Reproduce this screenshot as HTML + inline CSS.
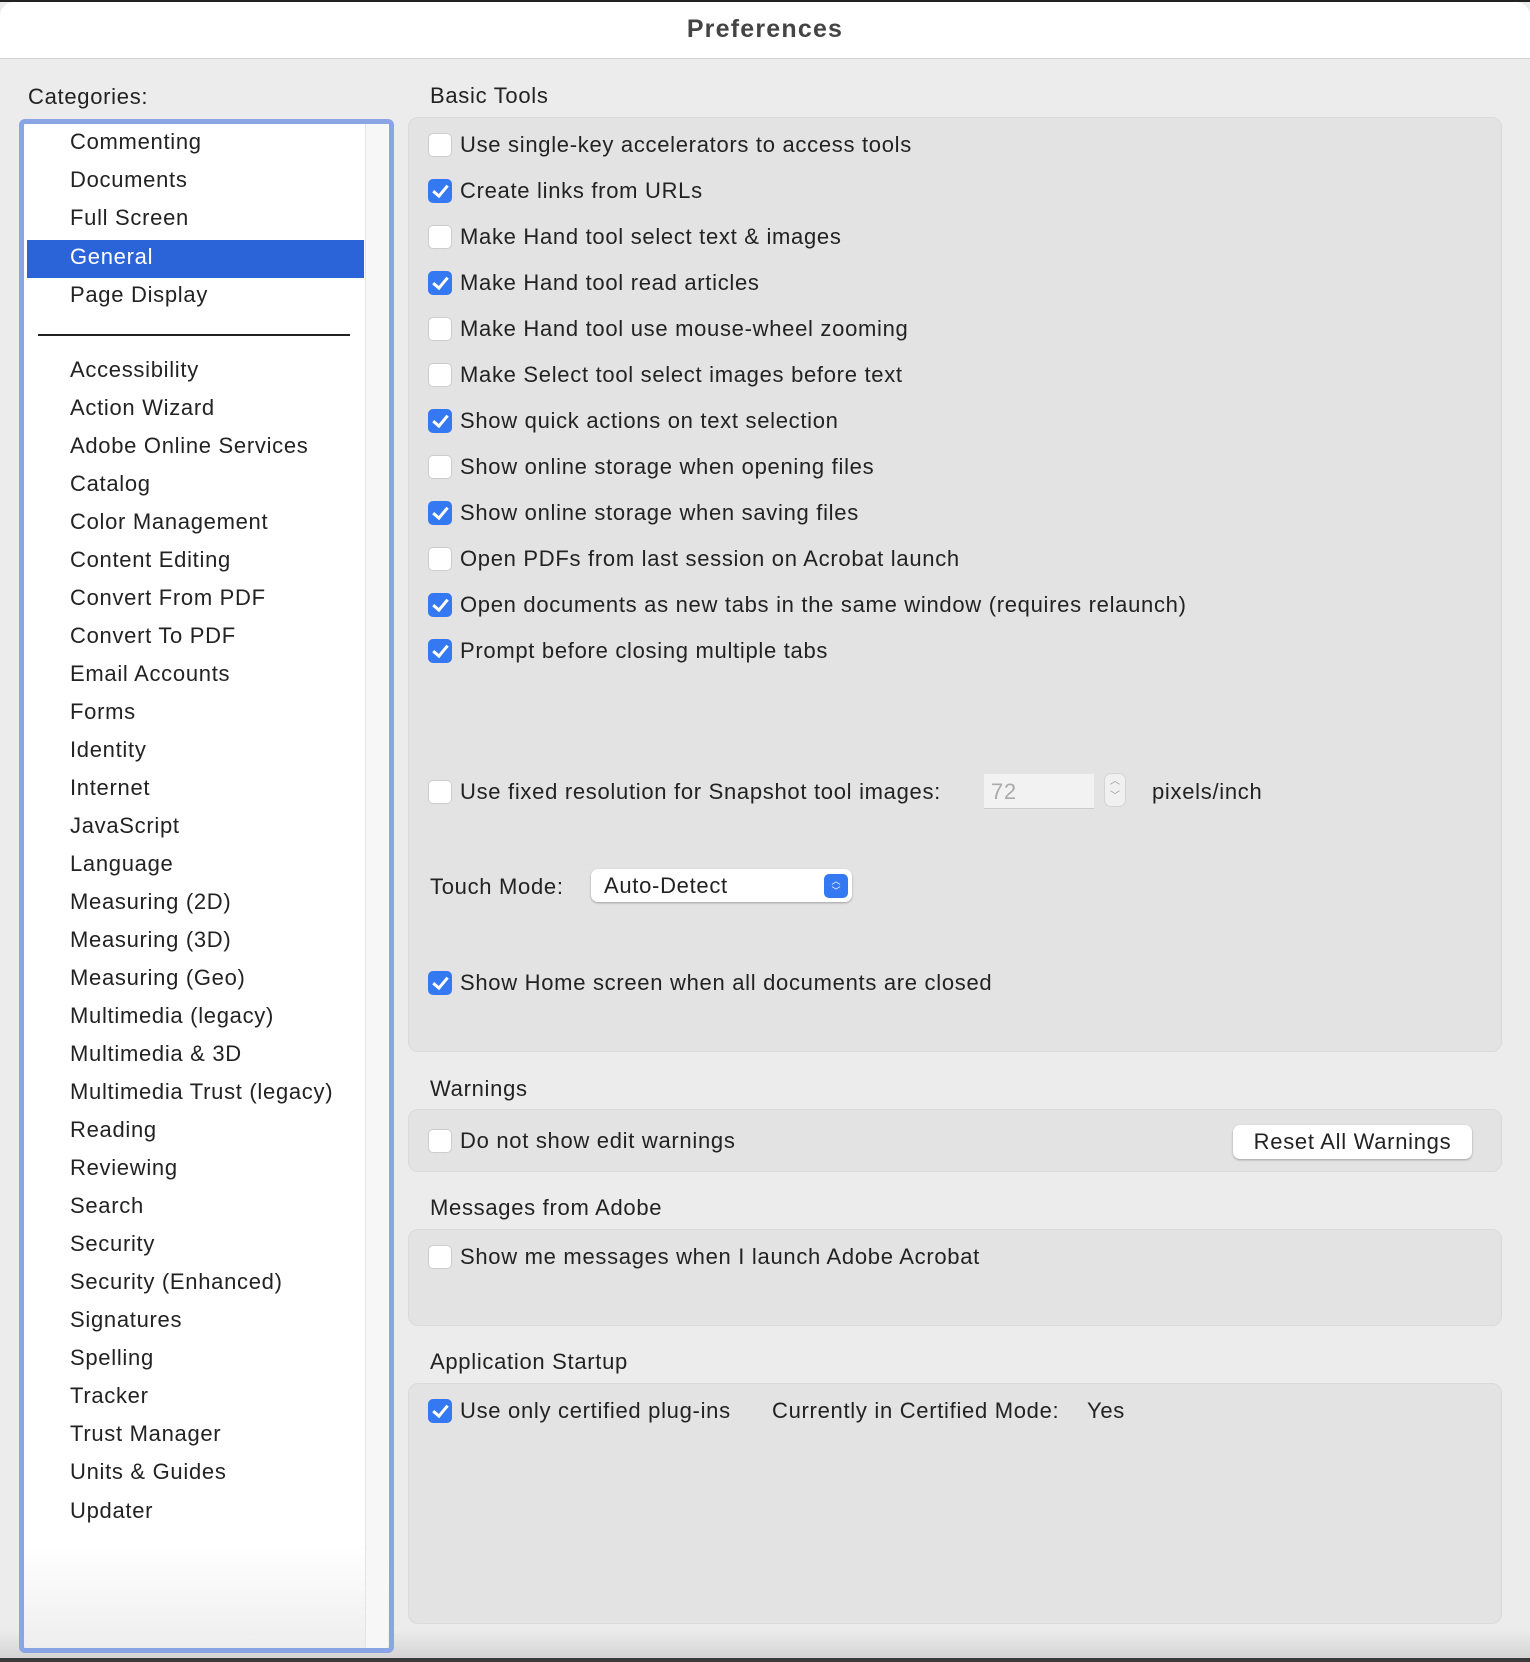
<!DOCTYPE html>
<html><head><meta charset="utf-8"><style>
*{margin:0;padding:0;box-sizing:border-box}
body{width:1530px;height:1662px;background:#ececec;font-family:"Liberation Sans",sans-serif;color:#222;position:relative;overflow:hidden;font-size:22px;letter-spacing:0.7px}
.a{position:absolute;white-space:nowrap}
.top{left:0;top:0;width:1530px;height:2px;background:#222}
.title{left:0;top:2px;width:1530px;height:57px;background:#fff;border-bottom:1px solid #cfcfcf;border-top-left-radius:14px;border-top-right-radius:14px}
.title span{position:absolute;left:0;right:0;top:13px;text-align:center;font-weight:bold;font-size:25px;letter-spacing:1.2px;color:#444}
.list{left:19px;top:119px;width:375px;height:1534px;border:5px solid #89a5e6;border-radius:6px;background:linear-gradient(#fff 1420px,#eee)}
.sb{left:365px;top:124px;width:23px;height:1524px;background:#f7f7f7;border-left:1px solid #e4e4e4}
.it{left:70px;transform:translateY(-50%)}
.sel{left:27px;top:240px;width:337px;height:38px;background:#2b63d8}
.sep{left:38px;top:334px;width:312px;height:2px;background:#222}
.box{border:1px solid #dadada;background:#e3e3e3;border-radius:10px}
.cb{left:428px;width:24px;height:24px;border-radius:5px;background:#fff;border:1px solid #ccc;transform:translateY(-50%)}
.cb.on{background:#3479f2;border-color:#3479f2}
.cb.on:after{content:"";position:absolute;left:7px;top:2px;width:6px;height:12px;border:solid #fff;border-width:0 3px 3px 0;transform:rotate(40deg)}
.t{left:460px;transform:translateY(-50%)}
.lbl{left:430px;transform:translateY(-50%)}
</style></head><body>
<div class="a top"></div>
<div class="a title"><span>Preferences</span></div>
<div class="a" style="left:28px;top:84px">Categories:</div>
<div class="a list"></div>
<div class="a sb"></div>
<div class="a sel"></div>
<div class="a it" style="top:142px">Commenting</div>
<div class="a it" style="top:180px">Documents</div>
<div class="a it" style="top:218px">Full Screen</div>
<div class="a it" style="top:257px;color:#fff">General</div>
<div class="a it" style="top:295px">Page Display</div>
<div class="a sep"></div>
<div class="a it" style="top:370px">Accessibility</div>
<div class="a it" style="top:408px">Action Wizard</div>
<div class="a it" style="top:446px">Adobe Online Services</div>
<div class="a it" style="top:484px">Catalog</div>
<div class="a it" style="top:522px">Color Management</div>
<div class="a it" style="top:560px">Content Editing</div>
<div class="a it" style="top:598px">Convert From PDF</div>
<div class="a it" style="top:636px">Convert To PDF</div>
<div class="a it" style="top:674px">Email Accounts</div>
<div class="a it" style="top:712px">Forms</div>
<div class="a it" style="top:750px">Identity</div>
<div class="a it" style="top:788px">Internet</div>
<div class="a it" style="top:826px">JavaScript</div>
<div class="a it" style="top:864px">Language</div>
<div class="a it" style="top:902px">Measuring (2D)</div>
<div class="a it" style="top:940px">Measuring (3D)</div>
<div class="a it" style="top:978px">Measuring (Geo)</div>
<div class="a it" style="top:1016px">Multimedia (legacy)</div>
<div class="a it" style="top:1054px">Multimedia &amp; 3D</div>
<div class="a it" style="top:1092px">Multimedia Trust (legacy)</div>
<div class="a it" style="top:1130px">Reading</div>
<div class="a it" style="top:1168px">Reviewing</div>
<div class="a it" style="top:1206px">Search</div>
<div class="a it" style="top:1244px">Security</div>
<div class="a it" style="top:1282px">Security (Enhanced)</div>
<div class="a it" style="top:1320px">Signatures</div>
<div class="a it" style="top:1358px">Spelling</div>
<div class="a it" style="top:1396px">Tracker</div>
<div class="a it" style="top:1434px">Trust Manager</div>
<div class="a it" style="top:1472px">Units &amp; Guides</div>
<div class="a it" style="top:1511px">Updater</div>

<div class="a lbl" style="top:96px">Basic Tools</div>
<div class="a box" style="left:408px;top:117px;width:1094px;height:935px"></div>
<div class="a cb" style="top:145px"></div><div class="a t" style="top:145px">Use single-key accelerators to access tools</div>
<div class="a cb on" style="top:191px"></div><div class="a t" style="top:191px">Create links from URLs</div>
<div class="a cb" style="top:237px"></div><div class="a t" style="top:237px">Make Hand tool select text &amp; images</div>
<div class="a cb on" style="top:283px"></div><div class="a t" style="top:283px">Make Hand tool read articles</div>
<div class="a cb" style="top:329px"></div><div class="a t" style="top:329px">Make Hand tool use mouse-wheel zooming</div>
<div class="a cb" style="top:375px"></div><div class="a t" style="top:375px">Make Select tool select images before text</div>
<div class="a cb on" style="top:421px"></div><div class="a t" style="top:421px">Show quick actions on text selection</div>
<div class="a cb" style="top:467px"></div><div class="a t" style="top:467px">Show online storage when opening files</div>
<div class="a cb on" style="top:513px"></div><div class="a t" style="top:513px">Show online storage when saving files</div>
<div class="a cb" style="top:559px"></div><div class="a t" style="top:559px">Open PDFs from last session on Acrobat launch</div>
<div class="a cb on" style="top:605px"></div><div class="a t" style="top:605px">Open documents as new tabs in the same window (requires relaunch)</div>
<div class="a cb on" style="top:651px"></div><div class="a t" style="top:651px">Prompt before closing multiple tabs</div>
<div class="a cb" style="top:792px"></div><div class="a t" style="top:792px">Use fixed resolution for Snapshot tool images:</div>
<div class="a" style="left:984px;top:774px;width:110px;height:35px;background:#f2f2f2;border-bottom:1px solid #ccc;color:#aaa;padding:5px 7px">72</div>
<div class="a" style="left:1104px;top:773px;width:22px;height:34px;background:#f0f0f0;border:1px solid #d4d4d4;border-radius:7px;font-size:10px;color:#999;text-align:center;line-height:15px;letter-spacing:0">︿<br>﹀</div>
<div class="a t" style="left:1152px;top:792px">pixels/inch</div>
<div class="a lbl" style="top:887px">Touch Mode:</div>
<div class="a" style="left:591px;top:869px;width:261px;height:33px;background:#fff;border-radius:7px;box-shadow:0 1px 2px rgba(0,0,0,.3);padding:4px 13px">Auto-Detect</div>
<div class="a" style="left:824px;top:874px;width:24px;height:24px;background:#3479f2;border-radius:5px;color:#fff;font-size:9px;text-align:center;line-height:10px;padding-top:2px;letter-spacing:0">︿<br>﹀</div>
<div class="a cb on" style="top:983px"></div><div class="a t" style="top:983px">Show Home screen when all documents are closed</div>

<div class="a lbl" style="top:1089px">Warnings</div>
<div class="a box" style="left:408px;top:1109px;width:1094px;height:63px"></div>
<div class="a cb" style="top:1141px"></div><div class="a t" style="top:1141px">Do not show edit warnings</div>
<div class="a" style="left:1233px;top:1125px;width:239px;height:34px;background:#fff;border-radius:7px;box-shadow:0 1px 2px rgba(0,0,0,.3);text-align:center;line-height:34px">Reset All Warnings</div>

<div class="a lbl" style="top:1208px">Messages from Adobe</div>
<div class="a box" style="left:408px;top:1229px;width:1094px;height:97px"></div>
<div class="a cb" style="top:1257px"></div><div class="a t" style="top:1257px">Show me messages when I launch Adobe Acrobat</div>

<div class="a lbl" style="top:1362px">Application Startup</div>
<div class="a box" style="left:408px;top:1383px;width:1094px;height:241px"></div>
<div class="a cb on" style="top:1411px"></div><div class="a t" style="top:1411px">Use only certified plug-ins</div>
<div class="a t" style="left:772px;top:1411px">Currently in Certified Mode:</div>
<div class="a t" style="left:1087px;top:1411px">Yes</div>

<div class="a" style="left:0;top:1630px;width:1530px;height:28px;background:linear-gradient(#ececec,#d4d4d4);z-index:-1"></div>
<div class="a" style="left:0;top:1658px;width:1530px;height:4px;background:#3a3a3a"></div>
</body></html>
